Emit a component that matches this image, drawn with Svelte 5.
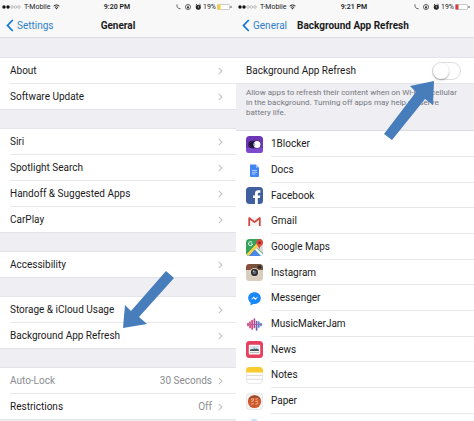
<script lang="ts">
  // Types
  type Item = { label: string; value?: string; muted?: boolean };

  // Variables
  const groups: Item[][] = [
    [{label: 'About'}, {label: 'Software Update'}],
    [
      {label: 'Siri'},
      {label: 'Spotlight Search'},
      {label: 'Handoff & Suggested Apps'},
      {label: 'CarPlay'},
    ],
    [{label: 'Accessibility'}],
    [{label: 'Storage & iCloud Usage'}, {label: 'Background App Refresh'}],
    [
      {label: 'Auto-Lock', value: '30 Seconds', muted: true},
      {label: 'Restrictions', value: 'Off'},
    ],
  ];

  const apps = [
    '1Blocker',
    'Docs',
    'Facebook',
    'Gmail',
    'Google Maps',
    'Instagram',
    'Messenger',
    'MusicMakerJam',
    'News',
    'Notes',
    'Paper',
  ];

  let refreshEnabled = $state(false);
</script>

{#snippet statusBar(time: string, level: string)}
  <div class="status">
    <div class="carrier">
      <svg width="19" height="6" viewBox="0 0 19 6">
        <circle cx="2" cy="3" r="1.7" fill="#111" />
        <circle cx="6" cy="3" r="1.7" fill="#111" />
        <circle cx="10" cy="3" r="1.3" fill="none" stroke="#888" stroke-width=".5" />
        <circle cx="13.5" cy="3" r="1.3" fill="none" stroke="#888" stroke-width=".5" />
        <circle cx="17" cy="3" r="1.3" fill="none" stroke="#888" stroke-width=".5" />
      </svg>
      <span>T-Mobile</span>
      <svg class="wifi" width="7" height="6" viewBox="0 0 7 6">
        <path d="M.6 2Q3.5-.4 6.4 2M1.8 3.5Q3.5 2 5.2 3.5" fill="none" stroke="#222" stroke-width="1" />
        <path d="M2.4 4.3L3.5 5.6 4.6 4.3Q3.5 3.5 2.4 4.3Z" fill="#222" />
      </svg>
    </div>
    <span class="time">{time}</span>
    <div class="indicators">
      <svg width="27" height="8" viewBox="0 0 27 8">
        <path d="M2 1.4Q1.4 5.6 5.6 5.8" fill="none" stroke="#555" stroke-width=".9" />
        <circle cx="13" cy="4" r="2.6" fill="none" stroke="#333" stroke-width=".7" />
        <rect x="12" y="3.7" width="2" height="1.7" fill="#333" />
        <path d="M12.3 3.7V3Q13 2 13.7 3V3.7" fill="none" stroke="#333" stroke-width=".5" />
        <circle cx="23.3" cy="4.2" r="2.5" fill="#222" />
        <path d="M20.8 2.3L22 1.2M25.8 2.3L24.6 1.2" stroke="#222" stroke-width="1" />
        <path d="M23.3 2.8V4.3L24.2 4.8" fill="none" stroke="#eee" stroke-width=".6" />
      </svg>
      <span>19%</span>
      <svg width="15" height="6" viewBox="0 0 15 6">
        <rect x=".5" y=".5" width="12" height="5" rx="1" fill="#fff" stroke="#aaa" stroke-width=".6" />
        <rect x=".5" y=".5" width="3" height="5" fill={level} />
        <rect x="13.5" y="2" width="1" height="2" fill="#555" />
      </svg>
    </div>
  </div>
{/snippet}

{#snippet backIcon()}
  <svg width="8" height="13" viewBox="0 0 8 13">
    <path d="M6.8 1L1.5 6.5 6.8 12" fill="none" stroke="#1778d4" stroke-width="1.8" />
  </svg>
{/snippet}

{#snippet appIcon(name: string)}
  <svg class="app-icon" viewBox="0 0 17 17">
    {#if name === '1Blocker'}
      <rect width="17" height="17" rx="3.5" fill="#6d36b5" />
      <path d="M0 12V13.5A3.5 3.5 0 0 0 3.5 17H13.5A3.5 3.5 0 0 0 17 13.5V12Z" fill="#7d4acb" />
      <rect x="2.3" y="4.7" width="12.6" height="7.6" rx="3.8" fill="#1d1237" />
      <circle cx="11" cy="8.5" r="3.5" fill="#fff" />
      <circle cx="6" cy="8.5" r="2.8" fill="none" stroke="#4b2a8a" stroke-width=".5" />
    {:else if name === 'Docs'}
      <path d="M4 2.5H10L13 5.5V14Q13 15 12 15H5Q4 15 4 14Z" fill="#4285f4" />
      <path d="M10 2.5L13 5.5H10Z" fill="#a6c5fa" />
      <path d="M6 8.5H11M6 10.3H11M6 12H9.5" stroke="#c9dcfc" stroke-width=".8" />
    {:else if name === 'Facebook'}
      <rect width="17" height="17" rx="3.5" fill="#3f5f9f" />
      <path d="M9 17V11H7V8.4H9V6.6Q9 3.2 12.2 3.2H14.4V5.8H13Q11.8 5.8 11.8 7V8.4H14.3L13.9 11H11.8V17Z" fill="#fff" />
    {:else if name === 'Gmail'}
      <rect x="2.5" y="4" width="12" height="9" fill="#f5f3f3" />
      <path d="M3.2 13V5L8.5 9.2 13.8 5V13" fill="none" stroke="#cf463d" stroke-width="1.7" stroke-linejoin="round" />
    {:else if name === 'Google Maps'}
      <rect width="17" height="17" rx="3.5" fill="#35a25a" />
      <path d="M9.5 7.5L17 1.5V14L12 10Z" fill="#dcdcdc" />
      <path d="M.5 15.3L13.5 1.5 15.5 3.5 3 17Q1 16.5 .5 15.3Z" fill="#f7d149" />
      <path d="M3 16.9L8.6 10.8 14.5 17H3.5Z" fill="#4b86ed" />
      <path d="M8.8 10.6L10.3 9 17 15Q16.4 16.5 15 17Z" fill="#f4f4f4" />
      <path d="M13.2 10.5Q12.8 7.6 11 5.8A3.4 3.4 0 1 1 16.2 5.8Q13.7 7.8 13.2 10.5Z" fill="#dd4b3e" />
      <circle cx="13.5" cy="3.7" r="1.2" fill="#8a221b" />
      <path d="M6.2 3.6A2 2 0 1 0 6.5 5H4.8" fill="none" stroke="#fff" stroke-width="1" />
    {:else if name === 'Instagram'}
      <rect width="17" height="17" rx="3.5" fill="#d9cdbd" />
      <path d="M0 6V3.5A3.5 3.5 0 0 1 3.5 0H13.5A3.5 3.5 0 0 1 17 3.5V6Z" fill="#75533f" />
      <path d="M2 .4V6M3.2 0V6M4.4 0V6" stroke="#a5493c" stroke-width=".7" />
      <rect x="11.8" y="1.6" width="3.4" height="3" rx=".7" fill="#2f2929" />
      <circle cx="8.5" cy="8.4" r="4.4" fill="#eee6da" />
      <circle cx="8.5" cy="8.4" r="3.6" fill="#34302f" />
      <circle cx="8.5" cy="8.4" r="1.9" fill="#5b6678" />
      <circle cx="7.6" cy="7.2" r=".7" fill="#cfd5dd" />
    {:else if name === 'Messenger'}
      <path d="M8.5 2.2C4.8 2.2 2.2 4.8 2.2 8.1C2.2 10 3.1 11.6 4.6 12.7V15.4L7.2 13.9C12 14.7 14.8 11.6 14.8 8.1C14.8 4.8 12.2 2.2 8.5 2.2Z" fill="#1787fb" />
      <path d="M4.6 9.9L7.7 6.6 9.3 8.2 12.4 6.6 9.3 9.9 7.7 8.3Z" fill="#fff" />
    {:else if name === 'MusicMakerJam'}
      <path d="M2 7.5V9.5M4 6V11.5M6.1 4.5V13" stroke="#d8467e" stroke-width="1.7" stroke-linecap="round" />
      <path d="M8.4 3V11.5" stroke="#b04c92" stroke-width="1.7" stroke-linecap="round" />
      <path d="M10.6 5.5V14" stroke="#6b66b4" stroke-width="1.7" stroke-linecap="round" />
      <path d="M12.8 6V11M15 7.5V9.5" stroke="#5189cc" stroke-width="1.7" stroke-linecap="round" />
      <path d="M1 8.5H16" stroke="#a95c9c" stroke-width=".9" />
    {:else if name === 'News'}
      <rect width="17" height="17" rx="3.5" fill="#e5405e" />
      <rect x="2.8" y="3.8" width="11.4" height="9.6" rx="1" fill="#fafafa" />
      <rect x="4" y="5" width="9" height="4.8" fill="#d5e6ed" />
      <path d="M4 10V8.8L6 8 7.5 8.4 8 6 8.8 8.2 10.5 7.5 13 8.8V10Z" fill="#435660" />
      <path d="M4 11.6H13" stroke="#999" stroke-width=".7" />
    {:else if name === 'Notes'}
      <rect x=".3" y=".3" width="16.4" height="16.4" rx="3.5" fill="#fdfdfd" stroke="#d8d8d8" stroke-width=".6" />
      <path d="M0 5.6V3.5A3.5 3.5 0 0 1 3.5 0H13.5A3.5 3.5 0 0 1 17 3.5V5.6Z" fill="#facb2f" />
      <path d="M.5 8.5H16.5M.5 12.3H16.5" stroke="#d0d0d0" stroke-width=".7" />
    {:else}
      <rect x=".3" y=".3" width="16.4" height="16.4" rx="3.5" fill="#f5f5f6" stroke="#dadade" stroke-width=".6" />
      <circle cx="8.5" cy="8.5" r="6.6" fill="#cf572c" />
      <path d="M3.2 5.8Q8.5 1 13.8 5.8" fill="none" stroke="#8b4a35" stroke-width="1.4" />
      <path d="M5 6.2L7.4 5.8 7 8.2 5.2 8.4M9.5 6.2L12 5.6M9.3 8.6L12.2 8M5.2 11.3L7.8 10.6M9.6 11.4Q12 11.5 11.6 9.4" fill="none" stroke="#f4c29c" stroke-width=".9" />
    {/if}
  </svg>
{/snippet}

<main class="screens">
  <section class="screen">
    <header>
      {@render statusBar('9:20 PM', '#f5cf3a')}
      <nav>
        <a class="back" href="#settings">{@render backIcon()}Settings</a>
        <h1>General</h1>
      </nav>
    </header>

    {#each groups as group}
      <ul class="group">
        {#each group as item (item.label)}
          <li>
            <a class="row" class:muted={item.muted} href="#item">
              <span class="label">{item.label}</span>
              {#if item.value}
                <span class="value">{item.value}</span>
              {/if}
              <svg width="5" height="8" viewBox="0 0 5 8">
                <path d="M.8 .8L4 4 .8 7.2" fill="none" stroke="#c4c4c8" stroke-width="1.1" />
              </svg>
            </a>
          </li>
        {/each}
      </ul>
    {/each}
  </section>

  <section class="screen">
    <header>
      {@render statusBar('9:21 PM', '#dd3b3b')}
      <nav class="packed">
        <a class="back" href="#general">{@render backIcon()}General</a>
        <h1>Background App Refresh</h1>
      </nav>
    </header>

    <div class="group">
      <label class="row">
        <span class="label">Background App Refresh</span>
        <input type="checkbox" role="switch" bind:checked={refreshEnabled} />
      </label>
    </div>
    <p class="note">
      Allow apps to refresh their content when on Wi-Fi or cellular in the background. Turning off
      apps may help preserve battery life.
    </p>

    <ul class="apps">
      {#each apps as app (app)}
        <li>
          {@render appIcon(app)}
          <span>{app}</span>
        </li>
      {/each}
      <li>
        <svg class="app-icon" viewBox="0 0 17 17">
          <rect x="5" y="1" width="6" height="14" rx="1" fill="#cfe0f2" />
        </svg>
      </li>
    </ul>
  </section>

  <!-- Pointers over both screens -->
  <svg class="arrows" width="474" height="421" viewBox="0 0 474 421">
    <path d="M123 328L125 305 131 311 166 271 174 278 139 317 147 324Z" />
    <path d="M434 81L410 86 416 92 384 134 392 140 425 99 433 105Z" />
  </svg>
</main>

<style>
    :global(body) {
        margin: 0;
        background: #fff;
    }

    .screens {
        position: relative;
        display: grid;
        grid-template-columns: 236fr 238fr;
        height: 100vh;
        overflow: hidden;
        font-family: Roboto, "Liberation Sans", sans-serif;
        font-size: 10px;
        color: #1b1b1d;
    }

    .screen {
        min-width: 0;
        background: #eeeef3;
    }

    header {
        height: 37px;
        background: #f8f8f9;
        border-bottom: 1px solid #dcdce0;
    }

    .status {
        display: grid;
        grid-template-columns: 1fr auto 1fr;
        align-items: center;
        height: 13px;
        padding: 0 4px 0 2px;
        font-size: 7px;
    }

    .carrier,
    .indicators {
        display: flex;
        align-items: center;
        gap: 1px;
    }

    .carrier {
        gap: 3px;
    }

    .indicators {
        justify-content: flex-end;
    }

    .time {
        font-weight: 600;
    }

    nav {
        display: grid;
        grid-template-columns: 1fr auto 1fr;
        align-items: center;
        height: 24px;
        padding: 0 6px;
    }

    .packed {
        display: flex;
        gap: 10px;
    }

    .back {
        display: flex;
        align-items: center;
        gap: 3px;
        color: #2f7fc8;
        text-decoration: none;
    }

    h1 {
        margin: 0;
        font-size: 10px;
        font-weight: 700;
        white-space: nowrap;
    }

    ul {
        margin: 0;
        padding: 0;
        list-style: none;
    }

    .group {
        margin-top: 20px;
        background: #fff;
        box-shadow: 0 1px #e4e4e8, 0 -1px #e4e4e8;
    }

    .group li + li {
        position: relative;
        padding-top: 1px;
    }

    .group li + li::before {
        content: "";
        position: absolute;
        inset: 0 0 auto 10px;
        height: 1px;
        background: #e8e8eb;
    }

    .row {
        display: flex;
        align-items: center;
        gap: 6px;
        height: 25px;
        padding: 0 13px 0 10px;
        color: inherit;
        text-decoration: none;
        white-space: nowrap;
    }

    .label {
        flex: 1;
    }

    .value,
    .muted {
        color: #8c8c90;
    }

    input {
        appearance: none;
        display: flex;
        width: 29px;
        height: 18px;
        margin: 0;
        border: 1px solid #dedee0;
        border-radius: 9px;
        background: #fff;
    }

    input::before {
        content: "";
        width: 16px;
        height: 16px;
        border-radius: 50%;
        background: #fff;
        box-shadow: 0 1px 2px #0005;
    }

    input:checked {
        justify-content: flex-end;
        background: #4cd964;
    }

    .note {
        margin: 0;
        padding: 5px 10px 12px;
        color: #77777c;
        font-size: 8px;
        line-height: 10px;
    }

    .apps {
        background: #fff;
        border-top: 1px solid #dcdce0;
    }

    .apps li {
        display: flex;
        align-items: center;
        gap: 8px;
        height: 26px;
        margin-left: 10px;
    }

    .apps li:nth-child(3n) {
        height: 25px;
    }

    .apps span {
        flex: 1;
        align-self: stretch;
        display: flex;
        align-items: center;
        border-bottom: 1px solid #e8e8eb;
    }

    .app-icon {
        width: 17px;
        height: 17px;
    }

    .arrows {
        position: absolute;
        top: 0;
        left: 0;
        fill: #477dbb;
        pointer-events: none;
    }
</style>
